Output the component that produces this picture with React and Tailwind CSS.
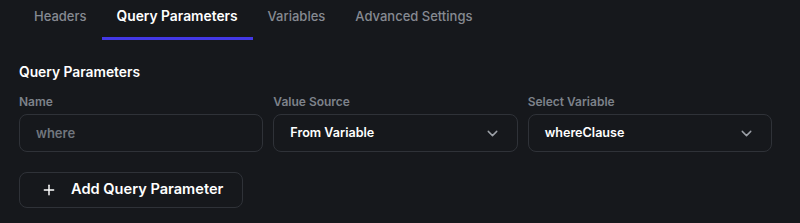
import React, { useState } from "react";
import { ChevronDown, Plus } from "lucide-react";

const TABS = ["Headers", "Query Parameters", "Variables", "Advanced Settings"];

function Field({ label, children }) {
  return (
    <div className="flex flex-col">
      <label className="text-[12px] leading-4 font-semibold text-[#7d828a] mb-1">{label}</label>
      {children}
    </div>
  );
}

function SelectBox({ value }) {
  return (
    <button className="h-[38px] w-full flex items-center justify-between pl-4 pr-4 rounded-lg border border-[#2f3238] bg-transparent text-left">
      <span className="text-[12.6px] font-semibold text-white">{value}</span>
      <ChevronDown size={17} strokeWidth={2} className="text-[#9ca0a7]" />
    </button>
  );
}

export default function App() {
  const [tab, setTab] = useState(1);

  return (
    <div
      className="w-[800px] h-[223px] bg-[#16181c] overflow-hidden"
      style={{ fontFamily: "Inter, 'Noto Sans', sans-serif" }}
    >
      {/* tab strip */}
      <div className="flex pl-[19px] h-10">
        {TABS.map((t, i) => (
          <button
            key={t}
            onClick={() => setTab(i)}
            className={`relative px-[15px] pt-[6px] pb-[14px] leading-5 ${
              i === tab ? "text-[13.8px] text-white font-semibold" : "text-[13px] text-[#868a92] font-medium"
            }`}
          >
            {t}
            {i === tab && <span className="absolute left-0 right-0 bottom-0 h-[3px] bg-[#4338e6]" />}
          </button>
        ))}
      </div>

      <div className="pl-[19px] pr-[28px]">
        <h2 className="mt-[22px] text-[13.8px] leading-5 font-semibold text-white">Query Parameters</h2>

        <div className="mt-3 grid grid-cols-3 gap-x-[10px]">
          <Field label="Name">
            <input
              placeholder="where"
              className="h-[38px] w-full px-4 rounded-lg border border-[#2f3238] bg-transparent text-[13px] font-semibold text-white placeholder:text-[#71767e] outline-none"
            />
          </Field>
          <Field label="Value Source">
            <SelectBox value="From Variable" />
          </Field>
          <Field label="Select Variable">
            <SelectBox value="whereClause" />
          </Field>
        </div>

        <button className="mt-5 h-9 flex items-center gap-[14px] pl-[21px] pr-[19px] rounded-lg border border-[#2f3238] text-white">
          <Plus size={16} strokeWidth={2.2} />
          <span className="text-[14.6px] font-semibold">Add Query Parameter</span>
        </button>
      </div>
    </div>
  );
}
